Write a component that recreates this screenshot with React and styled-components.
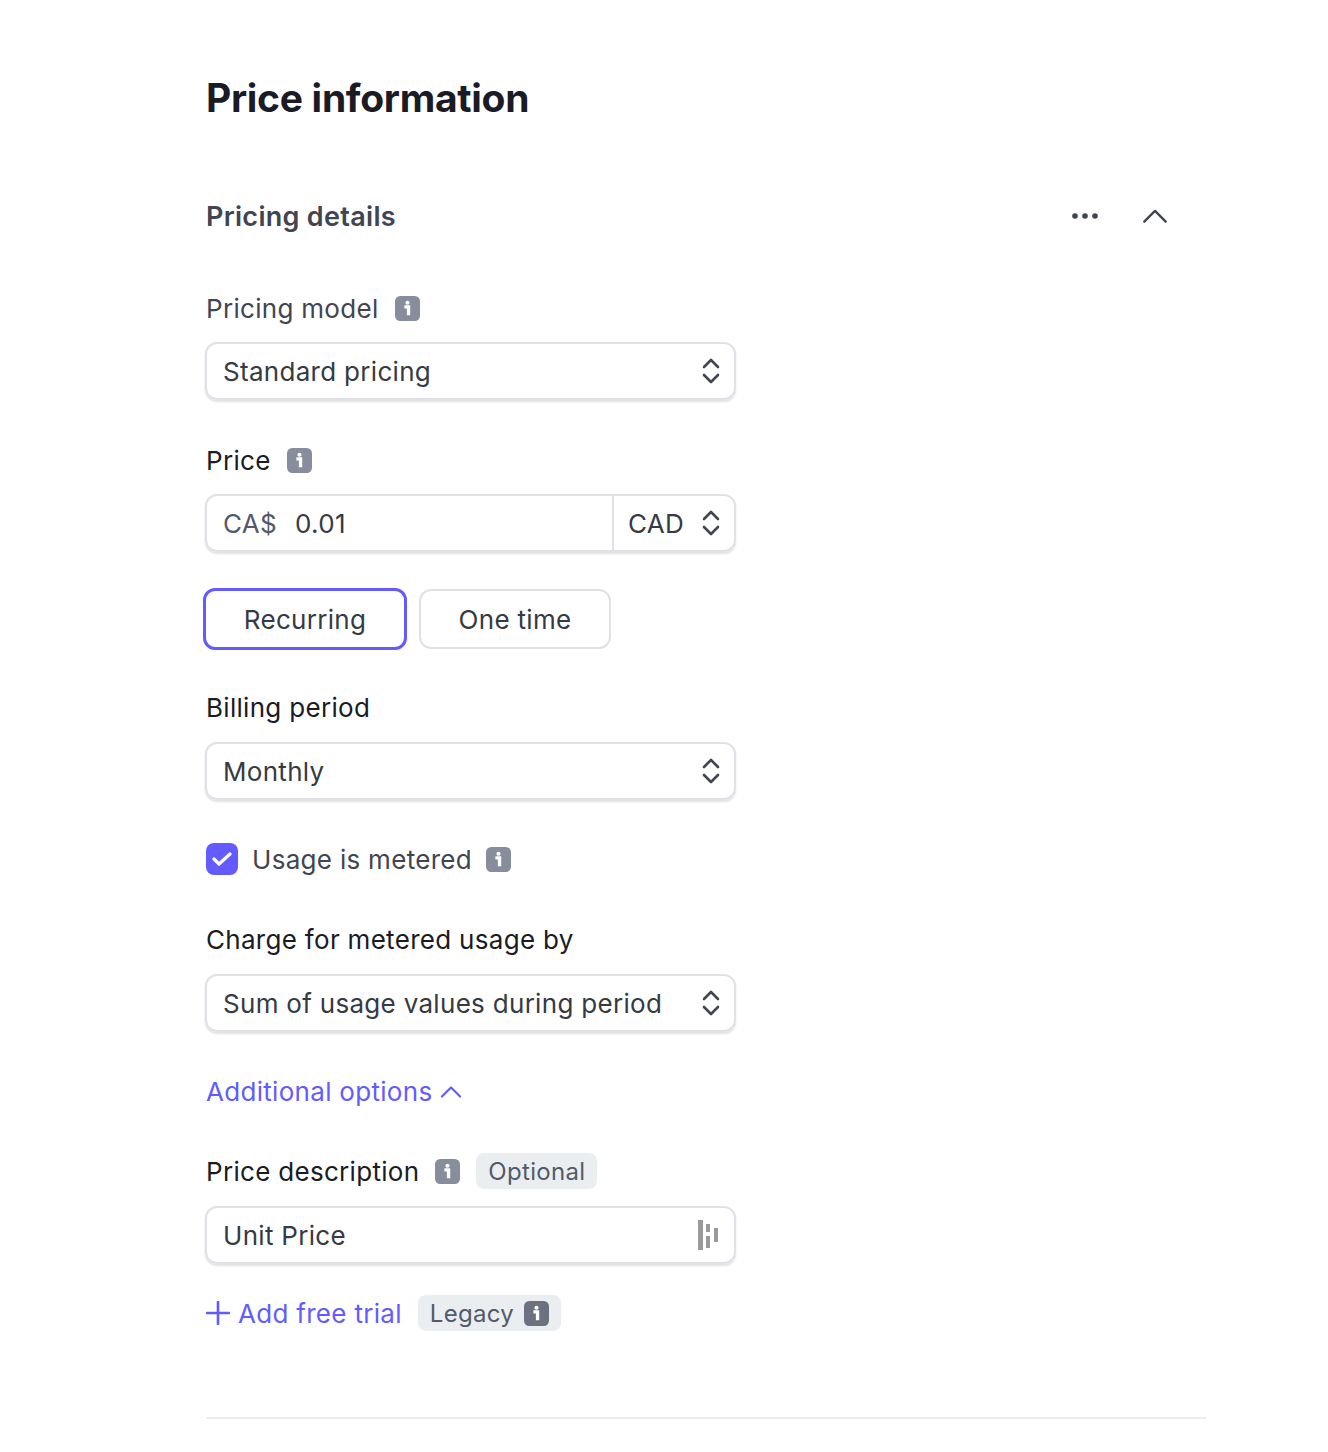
import React from "react";
import styled, { createGlobalStyle } from "styled-components";

const G = createGlobalStyle`
  body { margin:0; font-family: Inter, "Noto Sans", sans-serif; background:#fff; color:#414552; -webkit-font-smoothing:antialiased; letter-spacing:0.3px; }
`;
const Page = styled.div`padding:72px 122px 32px 206px; width:1000px;`;
const Title = styled.h1`margin:0; font-size:39px; font-weight:700; color:#1a1b25; line-height:52px; letter-spacing:-0.3px;`;
const Header = styled.div`display:flex; align-items:center; justify-content:space-between; margin-top:72px; padding-right:38px; height:40px;`;
const H2 = styled.h2`margin:0; font-size:27px; font-weight:600; color:#414552;`;
const Icons = styled.div`display:flex; gap:44px; align-items:center;`;
const Form = styled.div`display:flex; flex-direction:column; width:530px; margin-top:54px;`;
const Label = styled.div`display:flex; align-items:center; gap:16px; font-size:26px; color:${p=>p.dim?"#414552":"#1a1b25"}; height:36px; margin-top:${p=>p.mt||0}px;`;
const Box = styled.div`display:flex; align-items:center; height:58px; box-sizing:border-box; margin-top:${p=>p.mt||16}px; margin-left:-1px; border:2px solid #e0e1e6; border-radius:12px; box-shadow:0 2px 2px rgba(0,0,0,0.12); font-size:26px; color:#353a44; padding-left:16px;`;
const Grow = styled.div`flex:1; display:flex; gap:18px;`;
const Cur = styled.div`display:flex; align-items:center; gap:18px; height:100%; padding:0 14px 0 14px; border-left:2px solid #e0e1e6;`;
const Chev = styled.span`display:flex; padding-right:14px;`;
const Seg = styled.div`display:flex; gap:12px; margin-top:36px; margin-left:-3px;`;
const Btn = styled.div`box-sizing:border-box; display:flex; align-items:center; justify-content:center; font-size:26px; color:#353a44; border-radius:12px; width:${p=>p.w}px; border:${p=>p.on?"3px solid #635bff":"2px solid #e0e1e6"}; margin-top:${p=>p.on?0:1}px; height:${p=>p.on?62:60}px;`;
const Check = styled.div`display:flex; align-items:center; gap:14px; margin-top:43px; font-size:26px; color:#414552;`;
const CB = styled.span`width:32px;height:32px;border-radius:8px;background:#635bff;display:flex;align-items:center;justify-content:center;`;
const Link = styled.div`display:flex; align-items:center; gap:8px; color:#635bff; font-size:26px; margin-top:${p=>p.mt}px;`;
const Badge = styled.span`background:#ebeef1; border-radius:8px; padding:2px 12px; font-size:24px; color:#545969; display:inline-flex; align-items:center; gap:10px; height:36px; box-sizing:border-box;`;
const Row = styled.div`display:flex; align-items:center; gap:16px; margin-top:${p=>p.mt}px;`;
const Rule = styled.div`height:2px; background:#ebeef1; margin-top:86px; width:1000px;`;

const Info = ({c="#878d9c",s=25}) => (
  <svg width={s} height={s} viewBox="0 0 24 24"><rect width="24" height="24" rx="5" fill={c}/><circle cx="12" cy="6.5" r="2" fill="#fff"/><path d="M9 10.5h4v8" stroke="#fff" strokeWidth="3.2" fill="none"/></svg>
);
const UpDown = () => (
  <svg width="18" height="26" viewBox="0 0 18 26" fill="none" stroke="#414552" strokeWidth="2.6" strokeLinecap="round" strokeLinejoin="round"><path d="M2 9l7-7 7 7M2 17l7 7 7-7"/></svg>
);
const Up = ({c="#414552",s=26,w=2.4}) => (
  <svg width={s} height={s*0.6} viewBox="0 0 26 16" fill="none" stroke={c} strokeWidth={w} strokeLinecap="round" strokeLinejoin="round"><path d="M2 14L13 3l11 11"/></svg>
);

export default function App(){
  return (<Page><G/>
    <Title>Price information</Title>
    <Header><H2>Pricing details</H2>
      <Icons>
        <svg width="26" height="6" viewBox="0 0 26 6" fill="#414552"><circle cx="3" cy="3" r="2.8"/><circle cx="13" cy="3" r="2.8"/><circle cx="23" cy="3" r="2.8"/></svg>
        <Up/>
      </Icons>
    </Header>
    <Form>
      <Label dim>Pricing model <Info/></Label>
      <Box><Grow>Standard pricing</Grow><Chev><UpDown/></Chev></Box>
      <Label mt={42}>Price <Info/></Label>
      <Box><Grow><span style={{color:"#545969"}}>CA$</span><span>0.01</span></Grow><Cur>CAD <UpDown/></Cur></Box>
      <Seg><Btn on w={204}>Recurring</Btn><Btn w={192}>One time</Btn></Seg>
      <Label mt={39}>Billing period</Label>
      <Box mt={17}><Grow>Monthly</Grow><Chev><UpDown/></Chev></Box>
      <Check><CB><svg width="20" height="16" viewBox="0 0 20 16" fill="none" stroke="#fff" strokeWidth="3.2" strokeLinecap="round" strokeLinejoin="round"><path d="M2 8l5 5L18 3"/></svg></CB>Usage is metered <Info/></Check>
      <Label mt={46}>Charge for metered usage by</Label>
      <Box mt={17}><Grow>Sum of usage values during period</Grow><Chev><UpDown/></Chev></Box>
      <Link mt={44}>Additional options <Up c="#635bff" s={22} w={2.6}/></Link>
      <Row mt={46}><Label>Price description</Label><Info/><Badge>Optional</Badge></Row>
      <Box mt={17}><Grow>Unit Price</Grow><Chev><svg width="22" height="30" viewBox="0 0 22 30" fill="#9a9a9a"><rect x="0" y="0" width="5" height="30"/><rect x="8" y="4" width="4" height="8"/><rect x="8" y="16" width="4" height="12"/><rect x="16" y="8" width="4" height="14"/></svg></Chev></Box>
      <Row mt={31}><Link mt={0}><svg width="24" height="24" viewBox="0 0 24 24" stroke="#635bff" strokeWidth="2.6" strokeLinecap="round"><path d="M12 1v22M1 12h22"/></svg>Add free trial</Link><Badge>Legacy <Info c="#6c7180"/></Badge></Row>
    </Form>
    <Rule/>
  </Page>);
}
